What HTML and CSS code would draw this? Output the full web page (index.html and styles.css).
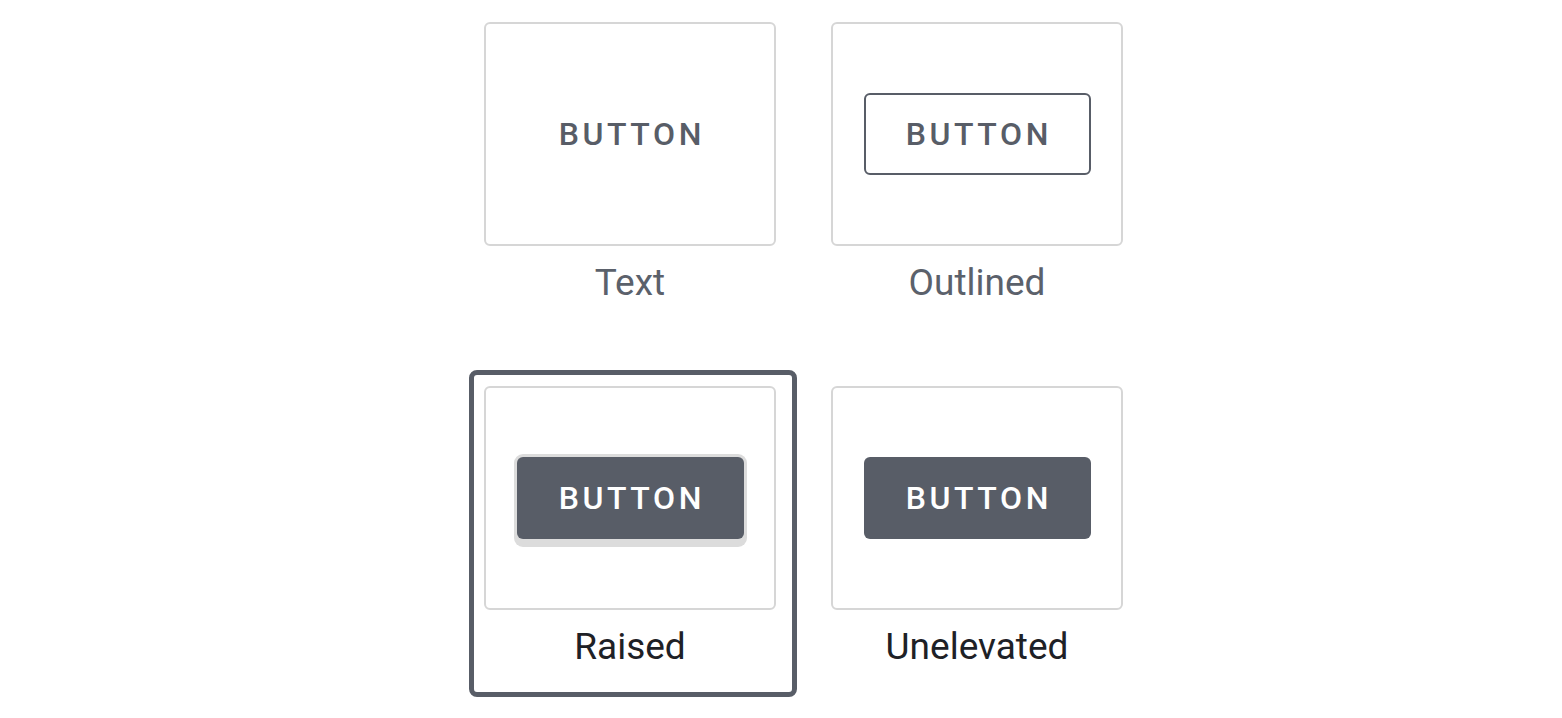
FILE: index.html
```html
<!DOCTYPE html>
<html lang="en">
<head>
<meta charset="utf-8">
<title>Button variants</title>
<link rel="stylesheet" href="styles.css">
</head>
<body>
<main class="grid">
  <div class="cell">
    <div class="card"><span class="btn btn-text">BUTTON</span></div>
    <div class="label">Text</div>
  </div>
  <div class="cell">
    <div class="card"><span class="btn btn-outlined">BUTTON</span></div>
    <div class="label">Outlined</div>
  </div>
  <div class="cell selected">
    <div class="card"><span class="btn btn-raised">BUTTON</span></div>
    <div class="label label-dark">Raised</div>
  </div>
  <div class="cell">
    <div class="card"><span class="btn btn-flat">BUTTON</span></div>
    <div class="label label-dark">Unelevated</div>
  </div>
</main>
</body>
</html>
```

FILE: styles.css
```css
html, body {
  margin: 0;
  padding: 0;
  background: #ffffff;
}

body {
  font-family: Roboto, "Liberation Sans", sans-serif;
}

.grid {
  display: grid;
  grid-template-columns: 328px 328px;
  column-gap: 19px;
  row-gap: 37px;
  padding: 6px 0 0 469px;
}

.cell {
  box-sizing: border-box;
  width: 328px;
  height: 327px;
  border: 5px solid transparent;
  border-radius: 8px;
  padding: 11px 16px 0 10px;
}

.cell.selected {
  border-color: #585d67;
}

.card {
  box-sizing: border-box;
  width: 292px;
  height: 224px;
  border: 2px solid #d6d6d6;
  border-radius: 6px;
  display: flex;
  align-items: center;
  justify-content: center;
}

.btn {
  box-sizing: border-box;
  display: flex;
  align-items: center;
  justify-content: center;
  font-family: Roboto, "Liberation Sans", sans-serif;
  font-weight: 500;
  font-size: 32px;
  letter-spacing: 3.6px;
  padding-left: 3.6px;
  color: #585d67;
}

.btn-outlined,
.btn-raised,
.btn-flat {
  width: 227px;
  height: 82px;
  border-radius: 6px;
}

.btn-outlined {
  border: 2px solid #585d67;
}

.btn-raised,
.btn-flat {
  background: #585d67;
  color: #ffffff;
}

.btn-raised {
  box-shadow: 0 0 0 3px #dcdcdc, 0 5px 0 3px #dcdcdc;
}

.label {
  width: 292px;
  margin-top: 16px;
  text-align: center;
  font-size: 37px;
  line-height: 42px;
  color: #5b616b;
}

.label-dark {
  color: #1e2126;
}
```
